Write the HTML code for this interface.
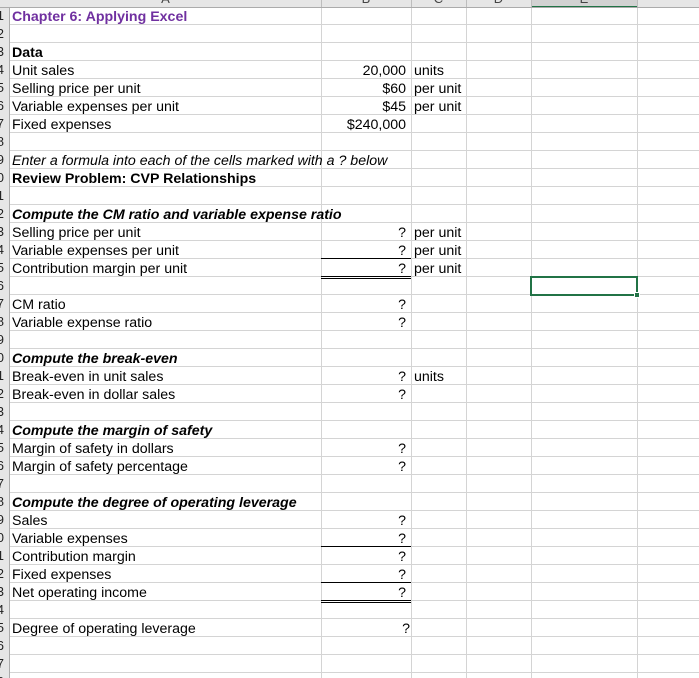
<!DOCTYPE html>
<html><head><meta charset="utf-8"><style>
*{margin:0;padding:0;box-sizing:border-box}
body{width:699px;height:678px;overflow:hidden;background:#fff;position:relative;font-family:"Liberation Sans",Arial,sans-serif;font-size:14.2px;color:#000}
.hdr{position:absolute;left:0;top:0;width:699px;height:8px;background:#e6e6e6;border-bottom:1px solid #ababab;overflow:hidden}
.hl{position:absolute;top:-9px;font-size:13px;color:#444;text-align:center}
.hs{position:absolute;top:0;width:1px;height:8px;background:#bdbdbd}
.rh{position:absolute;left:0;top:8px;width:10px;height:670px;background:#e6e6e6;border-right:1px solid #ababab;overflow:hidden}
.rn{position:absolute;right:5px;width:30px;text-align:right;height:18px;line-height:18px;font-size:13px;color:#222}
.grid{position:absolute;left:10px;top:7px;width:689px;height:671px;background:repeating-linear-gradient(to bottom,transparent 0 17px,#d4d4d4 17px 18px)}
.v{position:absolute;top:8px;width:1px;height:670px;background:#d4d4d4}
.t{position:absolute;height:18px;line-height:20px;white-space:nowrap}
.a{left:12px}
.b{left:321px;width:85px;text-align:right}
.c{left:414px}
.bold{font-weight:bold}
.bi{font-weight:bold;font-style:italic}
.ln{position:absolute;left:321px;width:90px;height:1px;background:#000}
</style></head><body>
<div class="grid"></div>
<div class="v" style="left:321px"></div>
<div class="v" style="left:411px"></div>
<div class="v" style="left:466px"></div>
<div class="v" style="left:531px"></div>
<div class="v" style="left:637px"></div>
<div class="hdr">
<div class="hl" style="left:10px;width:311px">A</div>
<div class="hl" style="left:321px;width:90px">B</div>
<div class="hl" style="left:411px;width:55px">C</div>
<div class="hl" style="left:466px;width:65px">D</div>
<div style="position:absolute;left:531px;top:0;width:106px;height:8px;background:#d2d2d2;border-bottom:2px solid #217346"></div>
<div class="hl" style="left:531px;width:106px">E</div>
<div class="hs" style="left:321px"></div><div class="hs" style="left:411px"></div><div class="hs" style="left:466px"></div><div class="hs" style="left:531px"></div><div class="hs" style="left:637px"></div>
</div>
<div class="rh">
<div class="rn" style="top:-1px">1</div><div class="rn" style="top:17px">2</div><div class="rn" style="top:35px">3</div><div class="rn" style="top:53px">4</div><div class="rn" style="top:71px">5</div><div class="rn" style="top:89px">6</div><div class="rn" style="top:107px">7</div><div class="rn" style="top:125px">8</div><div class="rn" style="top:143px">9</div><div class="rn" style="top:161px">10</div><div class="rn" style="top:179px">11</div><div class="rn" style="top:197px">12</div><div class="rn" style="top:215px">13</div><div class="rn" style="top:233px">14</div><div class="rn" style="top:251px">15</div><div class="rn" style="top:269px">16</div><div class="rn" style="top:287px">17</div><div class="rn" style="top:305px">18</div><div class="rn" style="top:323px">19</div><div class="rn" style="top:341px">20</div><div class="rn" style="top:359px">21</div><div class="rn" style="top:377px">22</div><div class="rn" style="top:395px">23</div><div class="rn" style="top:413px">24</div><div class="rn" style="top:431px">25</div><div class="rn" style="top:449px">26</div><div class="rn" style="top:467px">27</div><div class="rn" style="top:485px">28</div><div class="rn" style="top:503px">29</div><div class="rn" style="top:521px">30</div><div class="rn" style="top:539px">31</div><div class="rn" style="top:557px">32</div><div class="rn" style="top:575px">33</div><div class="rn" style="top:593px">34</div><div class="rn" style="top:611px">35</div><div class="rn" style="top:629px">36</div><div class="rn" style="top:647px">37</div><div class="rn" style="top:665px">38</div>
</div>

<div class="t a bold" style="top:7px;color:#7030a0">Chapter 6: Applying Excel</div>
<div class="t a bold" style="top:43px">Data</div>
<div class="t a" style="top:61px">Unit sales</div><div class="t b" style="top:61px">20,000</div><div class="t c" style="top:61px">units</div>
<div class="t a" style="top:79px">Selling price per unit</div><div class="t b" style="top:79px">$60</div><div class="t c" style="top:79px">per unit</div>
<div class="t a" style="top:97px">Variable expenses per unit</div><div class="t b" style="top:97px">$45</div><div class="t c" style="top:97px">per unit</div>
<div class="t a" style="top:115px">Fixed expenses</div><div class="t b" style="top:115px">$240,000</div>
<div class="t a" style="top:151px;font-style:italic">Enter a formula into each of the cells marked with a ? below</div>
<div class="t a bold" style="top:169px">Review Problem: CVP Relationships</div>
<div class="t a bi" style="top:205px">Compute the CM ratio and variable expense ratio</div>
<div class="t a" style="top:223px">Selling price per unit</div><div class="t b" style="top:223px">?</div><div class="t c" style="top:223px">per unit</div>
<div class="t a" style="top:241px">Variable expenses per unit</div><div class="t b" style="top:241px">?</div><div class="t c" style="top:241px">per unit</div>
<div class="ln" style="top:258px"></div>
<div class="t a" style="top:259px">Contribution margin per unit</div><div class="t b" style="top:259px">?</div><div class="t c" style="top:259px">per unit</div>
<div class="ln" style="top:276px"></div><div class="ln" style="top:278px"></div>
<div class="t a" style="top:295px">CM ratio</div><div class="t b" style="top:295px">?</div>
<div class="t a" style="top:313px">Variable expense ratio</div><div class="t b" style="top:313px">?</div>
<div class="t a bi" style="top:349px">Compute the break-even</div>
<div class="t a" style="top:367px">Break-even in unit sales</div><div class="t b" style="top:367px">?</div><div class="t c" style="top:367px">units</div>
<div class="t a" style="top:385px">Break-even in dollar sales</div><div class="t b" style="top:385px">?</div>
<div class="t a bi" style="top:421px">Compute the margin of safety</div>
<div class="t a" style="top:439px">Margin of safety in dollars</div><div class="t b" style="top:439px">?</div>
<div class="t a" style="top:457px">Margin of safety percentage</div><div class="t b" style="top:457px">?</div>
<div class="t a bi" style="top:493px">Compute the degree of operating leverage</div>
<div class="t a" style="top:511px">Sales</div><div class="t b" style="top:511px">?</div>
<div class="t a" style="top:529px">Variable expenses</div><div class="t b" style="top:529px">?</div>
<div class="ln" style="top:546px"></div>
<div class="t a" style="top:547px">Contribution margin</div><div class="t b" style="top:547px">?</div>
<div class="t a" style="top:565px">Fixed expenses</div><div class="t b" style="top:565px">?</div>
<div class="ln" style="top:582px"></div>
<div class="t a" style="top:583px">Net operating income</div><div class="t b" style="top:583px">?</div>
<div class="ln" style="top:600px"></div><div class="ln" style="top:602px"></div>
<div class="t a" style="top:619px">Degree of operating leverage</div><div class="t b" style="top:619px;width:89px">?</div>

<div style="position:absolute;left:530px;top:276px;width:108px;height:20px;border:2px solid #217346"></div>
<div style="position:absolute;left:634px;top:292px;width:6px;height:6px;background:#217346;border:1px solid #fff"></div>
</body></html>
